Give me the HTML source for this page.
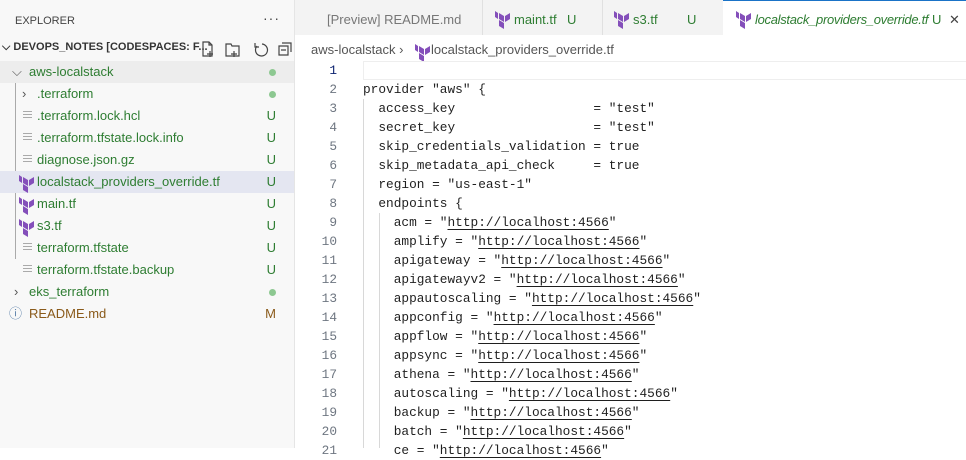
<!DOCTYPE html><html><head><style>
body{margin:0;width:966px;height:448px;overflow:hidden;background:#fff;font-family:"Liberation Sans",sans-serif;position:relative}
.sb{position:absolute;left:0;top:0;width:294px;height:448px;background:#f8f8f8;border-right:1px solid #e5e5e5}
.row{position:absolute;left:0;width:294px;height:22px;line-height:22px;font-size:13px;color:#2e7d32}
.row .n{position:absolute}
.row .s{position:absolute;right:18px;color:#2e7d32;font-size:13px}
.dot{position:absolute;right:18px;top:8px;width:7px;height:7px;border-radius:50%;background:#8dc891}
.fi{position:absolute;top:6px;width:9px;height:9px;background:repeating-linear-gradient(#aaa 0 1px,transparent 1px 3px)}
.tf{position:absolute;top:4px}
.tabs{position:absolute;left:295px;top:0;width:671px;height:35px;background:#f3f3f3}
.t{position:absolute;font-size:13px;top:12px;white-space:nowrap}
.code{position:absolute;left:295px;top:61px;font-family:"Liberation Mono",monospace;font-size:12.8px}
.ln{position:absolute;width:42px;text-align:right;color:#6e7681;height:19px;line-height:19px}
.tx{position:absolute;left:68px;white-space:pre;color:#1f1f1f;height:19px;line-height:19px}
.u{text-decoration:underline;text-underline-offset:3px}
.g{position:absolute;width:1px;background:#d8d8d8}
</style></head><body>
<svg width="0" height="0" style="position:absolute"><defs><g id="tfi"><path d="M5 2l5 3v6L5 8z M11 5l5-3v6l-5 3z M5 9l5 3v6L5 15z M1 0l3 2v6L1 6z" fill="#844fba"/></g></defs></svg>
<div class="sb">
<div style="position:absolute;left:15px;top:15px;font-size:11px;color:#444">EXPLORER</div>
<div style="position:absolute;left:263px;top:10px;font-size:14px;color:#444;letter-spacing:1px">···</div>
<div style="position:absolute;left:2px;top:41px;font-size:11px;font-weight:bold;color:#333">⌵ DEVOPS_NOTES [CODESPACES: F...</div>
<svg style="position:absolute;left:200px;top:40px" width="92" height="18" fill="none" stroke="#444" stroke-width="1.2">
<path d="M3 2h6l3 3v11H3z M9 2v3h3 M10 11v6 M7 14h6"/>
<path d="M26 4h5l1 2h7v10H26z M34 11v6 M31 14h6"/>
<path d="M62 4a6 6 0 1 1-5 2 M55 3v4h4"/>
<path d="M79 6h9v9h-9z M82 3h9v9 M81 10h5"/>
</svg>
<div class="row" style="top:61px;background:#ededed"><span class="n" style="left:12px;color:#555">⌵</span><span class="n" style="left:29px">aws-localstack</span><i class="dot"></i></div>
<div style="position:absolute;left:15px;top:83px;width:1px;height:176px;background:#aaa"></div>
<div class="row" style="top:83px"><span class="n" style="left:22px;color:#555">›</span><span class="n" style="left:37px">.terraform</span><i class="dot"></i></div>
<div class="row" style="top:105px"><i class="fi" style="left:23px"></i><span class="n" style="left:37px">.terraform.lock.hcl</span><span class="s">U</span></div>
<div class="row" style="top:127px"><i class="fi" style="left:23px"></i><span class="n" style="left:37px">.terraform.tfstate.lock.info</span><span class="s">U</span></div>
<div class="row" style="top:149px"><i class="fi" style="left:23px"></i><span class="n" style="left:37px">diagnose.json.gz</span><span class="s">U</span></div>
<div class="row" style="top:171px;background:#e4e6f1"><svg class="tf" style="left:18px" width="16" height="18"><use href="#tfi"/></svg><span class="n" style="left:37px">localstack_providers_override.tf</span><span class="s">U</span></div>
<div class="row" style="top:193px"><svg class="tf" style="left:18px" width="16" height="18"><use href="#tfi"/></svg><span class="n" style="left:37px">main.tf</span><span class="s">U</span></div>
<div class="row" style="top:215px"><svg class="tf" style="left:18px" width="16" height="18"><use href="#tfi"/></svg><span class="n" style="left:37px">s3.tf</span><span class="s">U</span></div>
<div class="row" style="top:237px"><i class="fi" style="left:23px"></i><span class="n" style="left:37px">terraform.tfstate</span><span class="s">U</span></div>
<div class="row" style="top:259px"><i class="fi" style="left:23px"></i><span class="n" style="left:37px">terraform.tfstate.backup</span><span class="s">U</span></div>
<div class="row" style="top:281px"><span class="n" style="left:14px;color:#555">›</span><span class="n" style="left:29px">eks_terraform</span><i class="dot"></i></div>
<div class="row" style="top:303px;color:#8a5a1a"><span class="n" style="left:9px;color:#5a7fa8">ⓘ</span><span class="n" style="left:29px">README.md</span><span class="s" style="color:#8a5a1a">M</span></div>
</div>
<div class="tabs">
<div style="position:absolute;left:187px;top:0;width:1px;height:35px;background:#e0e0e0"></div>
<div style="position:absolute;left:307px;top:0;width:1px;height:35px;background:#e0e0e0"></div>
<div style="position:absolute;left:428px;top:0;width:243px;height:34px;background:#fff;border-top:1px solid #1a73c7"></div>
</div>
<div class="t" style="left:327px;color:#777">[Preview] README.md</div>
<svg style="position:absolute;left:494px;top:11px" width="16" height="18"><use href="#tfi"/></svg>
<div class="t" style="left:514px;color:#2e7d32">maint.tf</div>
<div class="t" style="left:567px;color:#2e7d32">U</div>
<svg style="position:absolute;left:613px;top:11px" width="16" height="18"><use href="#tfi"/></svg>
<div class="t" style="left:633px;color:#2e7d32">s3.tf</div>
<div class="t" style="left:687px;color:#2e7d32">U</div>
<svg style="position:absolute;left:735px;top:11px" width="16" height="18"><use href="#tfi"/></svg>
<div class="t" style="left:755px;color:#2e7d32;font-style:italic;letter-spacing:-0.3px">localstack_providers_override.tf</div>
<div class="t" style="left:932px;color:#2e7d32">U</div>
<div class="t" style="left:949px;color:#444">✕</div>
<div style="position:absolute;left:311px;top:42px;font-size:13px;color:#555">aws-localstack ›</div>
<svg style="position:absolute;left:414px;top:44px" width="16" height="18"><use href="#tfi"/></svg>
<div style="position:absolute;left:431px;top:42px;font-size:13px;color:#555">localstack_providers_override.tf</div>
<div style="position:absolute;left:363px;top:61px;width:603px;height:17px;border:1px solid #eee"></div>
<div class="g" style="left:363px;top:99px;height:349px"></div>
<div class="g" style="left:379px;top:213px;height:235px"></div>
<div class="code" id="c"></div>
<script>
var L=['','provider "aws" {','  access_key                  = "test"','  secret_key                  = "test"','  skip_credentials_validation = true','  skip_metadata_api_check     = true','  region = "us-east-1"','  endpoints {'];
var e=['acm','amplify','apigateway','apigatewayv2','appautoscaling','appconfig','appflow','appsync','athena','autoscaling','backup','batch','ce'];
var h='';
for(var i=0;i<21;i++){var t,y=i*19;
if(i<8)t=L[i];else t='    '+e[i-8]+' = "<span class="u">http://localhost:4566</span>"';
h+='<div class="ln" style="top:'+y+'px;'+(i==0?'color:#0b216f':'')+'">'+(i+1)+'</div><div class="tx" style="top:'+y+'px">'+t+'</div>';}
document.getElementById('c').innerHTML=h;
</script>
</body></html>
